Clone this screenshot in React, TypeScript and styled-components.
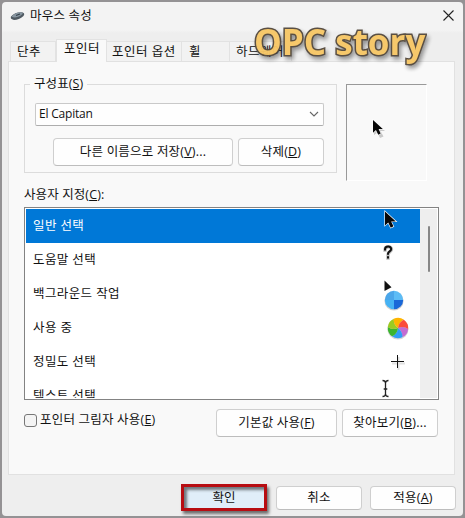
import React, { useState } from "react";
import styled, { createGlobalStyle } from "styled-components";

const GlobalStyle = createGlobalStyle`
  * {
    box-sizing: border-box;
  }
  body {
    margin: 0;
    overflow: hidden;
    background: #949294;
    font-family: "Open Sans", "Noto Sans CJK KR", sans-serif;
    font-size: 12.5px;
    line-height: 16px;
    color: #111;
  }
  u {
    text-underline-offset: 1px;
    text-decoration-thickness: 1px;
  }
`;

const Desktop = styled.div`
  width: 465px;
  height: 518px;
  padding: 2px;
  background: #949294;
`;

const Dialog = styled.div`
  position: relative;
  display: flex;
  flex-direction: column;
  height: 514px;
  padding: 0 7px 0 6px;
  border-radius: 4px;
  background: linear-gradient(#f3f3f3 0, #f3f3f3 28px, #eeeeee 31px);
`;

const TitleBar = styled.header`
  display: flex;
  align-items: center;
  height: 37px;
  padding: 0 0 9px 2px;
  span {
    flex: 1;
    margin-left: 5px;
    letter-spacing: 0.2px;
  }
`;

const CloseButton = styled.button`
  display: flex;
  border: 0;
  padding: 0;
  margin: 0 2px 2px 0;
  background: none;
`;

///////////////////////TABS////////////////////
const TabList = styled.nav`
  display: flex;
  align-items: flex-end;
  height: 22px;
  padding-left: 2px;
`;

interface TabProps {
  $width: number;
  $indent: number;
  $active?: boolean;
}

const Tab = styled.div<TabProps>`
  width: ${(props) => props.$width}px;
  height: ${(props) => (props.$active ? 23 : 20)}px;
  margin-bottom: ${(props) => (props.$active ? -1 : 0)}px;
  padding: ${(props) => (props.$active ? 1 : 2)}px 0 0 ${(props) => props.$indent}px;
  border: 1px solid #e2e2e2;
  border-bottom: 0;
  border-left-width: ${(props) => (props.$active ? 1 : 0)}px;
  background: ${(props) => (props.$active ? "#f9f9f9" : "#f2f2f2")};
  letter-spacing: 0.5px;
  white-space: nowrap;
  z-index: 1;
  &:first-child {
    border-left-width: 1px;
  }
`;

const Panel = styled.main`
  height: 414px;
  width: 447px;
  padding: 22px 15px 0;
  border: 1px solid #e1e1e1;
  background: #f9f9f9;
`;

const SchemeArea = styled.div`
  display: flex;
  justify-content: space-between;
  width: 403px;
`;

const Group = styled.fieldset`
  width: 312px;
  height: 97px;
  margin: -8px 0 0;
  padding: 11px 12px 0 10px;
  border: 1px solid #dcdcdc;
  legend {
    margin-left: -5px;
    padding: 0 4px;
    letter-spacing: 0.1px;
  }
`;

const SchemeSelect = styled.div`
  display: flex;
  align-items: center;
  justify-content: space-between;
  width: 289px;
  height: 23px;
  padding: 0 4px 1px 3px;
  border: 1px solid #c9c9c9;
  border-bottom-color: #adadad;
  border-radius: 2px;
  background: #fefefe;
  font-size: 12px;
  letter-spacing: -0.2px;
`;

const ButtonRow = styled.div<{ $top: number; $gap: number }>`
  display: flex;
  justify-content: flex-end;
  gap: ${(props) => props.$gap}px;
  margin-top: ${(props) => props.$top}px;
`;

const Button = styled.button<{ $width: number; $height?: number }>`
  width: ${(props) => props.$width}px;
  height: ${(props) => props.$height ?? 28}px;
  padding: 0 0 1px;
  border: 1px solid #cfcfcf;
  border-bottom-color: #bdbdbd;
  border-radius: 4px;
  background: #fefefe;
  color: #111;
  font: inherit;
  letter-spacing: 0.2px;
  white-space: nowrap;
`;

const Preview = styled.div`
  width: 81px;
  height: 97px;
  border: 1px solid #fff;
  border-top-color: #999;
  border-left-color: #999;
`;

///////////////////////CURSOR LIST////////////////////
const ListLabel = styled.div`
  margin: 6px 0 4px;
  letter-spacing: 0.1px;
`;

const CursorList = styled.div`
  display: flex;
  width: 415px;
  height: 193px;
  padding: 1px;
  border: 1px solid #838383;
  background: #fff;
  overflow: hidden;
`;

const Rows = styled.div`
  flex: 1;
  height: 189px;
  overflow: hidden;
`;

const Row = styled.div<{ $selected: boolean }>`
  display: flex;
  justify-content: space-between;
  height: 34px;
  padding-left: 7px;
  line-height: 34px;
  letter-spacing: 0.4px;
  color: ${(props) => (props.$selected ? "#fff" : "#111")};
  background: ${(props) => (props.$selected ? "#0078d7" : "#fff")};
`;

const ScrollBar = styled.div`
  width: 17px;
  height: 189px;
  padding: 17px 7px 0 8px;
  background: #eeeeee;
  &::before {
    content: "";
    display: block;
    height: 46px;
    border-radius: 1px;
    background: #868686;
  }
`;

const Options = styled.div`
  display: flex;
  justify-content: space-between;
  width: 414px;
  margin-top: 9px;
`;

const CheckLabel = styled.label`
  display: flex;
  align-items: center;
  height: 22px;
  gap: 3px;
  letter-spacing: 0.2px;
`;

const CheckBox = styled.span`
  width: 13px;
  height: 13px;
  border: 1px solid #777;
  border-radius: 3px;
  background: #f4f4f4;
`;

const Footer = styled.footer`
  display: flex;
  padding: 9px 0 0 173px;
`;

const OkButton = styled.button`
  width: 88px;
  height: 27px;
  margin-right: 8px;
  padding: 0 0 1px;
  border: 3px solid #b70d12;
  background: #e0eef9;
  box-shadow: 2px 3px 3px rgba(0, 0, 0, 0.55), inset 3px 3px 3px rgba(0, 0, 0, 0.5);
  color: #111;
  font: inherit;
  line-height: 17px;
`;

const FooterButtons = styled.div`
  display: flex;
  gap: 8px;
  padding: 2px 0 0 1px;
`;

const Watermark = styled.div`
  position: absolute;
  top: 18px;
  left: 252px;
  z-index: 5;
  font: 700 35px/44px "Open Sans", sans-serif;
  color: #f7c766;
  -webkit-text-stroke: 3px #54493d;
  paint-order: stroke fill;
  filter: drop-shadow(2px 3px 2px rgba(0, 0, 0, 0.4));
  opacity: 0.96;
  white-space: nowrap;
  pointer-events: none;
`;

const Arrow = ({ x, y, scale = 1 }: { x: number; y: number; scale?: number }) => (
  <path
    transform={`translate(${x} ${y}) scale(${scale})`}
    d="M0 0V15.5L3.6 12.3L6.4 18L9.4 16.5L6.8 11H12Z"
    fill="#080808"
    stroke="#fff"
    strokeWidth="1.4"
    paintOrder="stroke"
  />
);

const wedge = (r: number, from: number, to: number) => {
  const point = (a: number, d: number) => {
    const rad = (a * Math.PI) / 180;
    return `${(Math.cos(rad) * d).toFixed(2)} ${(Math.sin(rad) * d).toFixed(2)}`;
  };
  return `M0 0Q${point(from - 28, r * 0.6)} ${point(from, r)}A${r} ${r} 0 0 1 ${point(to, r)}Q${point(to - 28, r * 0.6)} 0 0Z`;
};

const beachColors = ["#c46bd2", "#2f9df5", "#3bb52e", "#9ccb22", "#ffb400", "#fb4b3c"];

const CursorIcon = ({ kind }: { kind: string }) => (
  <svg width="44" height="34" viewBox="0 0 44 34">
    {kind === "normal" && <Arrow x={9} y={2.5} scale={0.9} />}
    {kind === "help" && (
      <g fill="none" strokeLinecap="square">
        <path
          d="M9 7C9 2.8 15.5 2.8 15.5 6.3C15.5 9 12 8.7 12 11.4M12 14.7V15"
          stroke="#bbb"
          strokeWidth="3.4"
        />
        <path
          d="M9 6.4C9 2.6 15.2 2.6 15.2 6C15.2 8.5 12 8.3 12 10.8M12 14.2V14.5"
          stroke="#111"
          strokeWidth="2"
        />
      </g>
    )}
    {kind === "background" && (
      <>
        <path d="M8.5 3.5V14L15.5 10.3Z" fill="#111" />
        <ellipse cx="18" cy="24" rx="9.6" ry="9.4" fill="#d2d2d2" />
        <path d="M18 23V13.8A9.2 9.2 0 0 0 8.8 23Z" fill="#4aa6ea" />
        <path d="M18 23V13.8A9.2 9.2 0 0 1 27.2 23Z" fill="#5cbcf6" />
        <path d="M18 23H8.8A9.2 9.2 0 0 0 18 32.2Z" fill="#45b2f4" />
        <path d="M18 23H27.2A9.2 9.2 0 0 1 18 32.2Z" fill="#1a68d8" />
      </>
    )}
    {kind === "busy" && (
      <>
        <circle cx="22" cy="18" r="10.6" fill="#d6d6d6" />
        <g transform="translate(22 17)">
          {beachColors.map((color, i) => (
            <path key={color} d={wedge(10.2, i * 60 + 5, i * 60 + 66)} fill={color} />
          ))}
        </g>
      </>
    )}
    {kind === "precision" && (
      <>
        <path d="M16 18.5H29M22.5 12V25" stroke="#e2e2e2" strokeWidth="2" />
        <path d="M15 16.5H28M21.5 10V23" stroke="#111" />
      </>
    )}
    {kind === "text" && (
      <path
        d="M6.5 1.5Q9.5 1.5 9.5 4Q9.5 1.5 12.5 1.5M9.5 4V15M7.7 10H11.3M6.5 17.5Q9.5 17.5 9.5 15Q9.5 17.5 12.5 17.5"
        fill="none"
        stroke="#222"
        strokeWidth="1.3"
      />
    )}
  </svg>
);

const cursors = [
  { name: "일반 선택", kind: "normal" },
  { name: "도움말 선택", kind: "help" },
  { name: "백그라운드 작업", kind: "background" },
  { name: "사용 중", kind: "busy" },
  { name: "정밀도 선택", kind: "precision" },
  { name: "텍스트 선택", kind: "text" },
];

const App = () => {
  const [selected, setSelected] = useState(0);

  return (
    <Desktop>
      <GlobalStyle />
      <Dialog>
        <TitleBar>
          <svg width="15" height="10" viewBox="0 0 15 10">
            <path d="M1 5.5Q0 8.5 4 9Q9 9 13.5 5Q15.5 2 12 1.2Q5 0.8 1 5.5Z" fill="#4f5961" />
            <path d="M1.5 5.5Q5 1.4 12 1.3Q14 2.7 10 5Q5 7.6 1.5 5.5Z" fill="#8896a1" />
            <path d="M6 4.5L10 3" stroke="#35404a" strokeWidth="1.2" />
          </svg>
          <span>마우스 속성</span>
          <CloseButton aria-label="닫기">
            <svg width="11" height="11" viewBox="0 0 11 11">
              <path d="M0.5 0.5L10.5 10.5M10.5 0.5L0.5 10.5" stroke="#222" strokeWidth="1.1" />
            </svg>
          </CloseButton>
        </TitleBar>
        <TabList>
          <Tab $width={46} $indent={6}>단추</Tab>
          <Tab $width={51} $indent={7} $active>포인터</Tab>
          <Tab $width={75} $indent={5}>포인터 옵션</Tab>
          <Tab $width={48} $indent={7}>휠</Tab>
          <Tab $width={62} $indent={6}>하드웨어</Tab>
        </TabList>
        <Panel>
          <SchemeArea>
            <Group>
              <legend>구성표(<u>S</u>)</legend>
              <SchemeSelect>
                El Capitan
                <svg width="10" height="6" viewBox="0 0 10 6">
                  <path d="M1 1L5 5L9 1" fill="none" stroke="#666" strokeWidth="1.1" />
                </svg>
              </SchemeSelect>
              <ButtonRow $top={12} $gap={5}>
                <Button $width={180}>다른 이름으로 저장(<u>V</u>)...</Button>
                <Button $width={86}>삭제(<u>D</u>)</Button>
              </ButtonRow>
            </Group>
            <Preview>
              <svg width="79" height="95" viewBox="0 0 79 95">
                <path d="M27 37V50L30.5 47.5L33 53L36.5 51.5L33.5 46H38Z" fill="#c9c9c9" />
                <Arrow x={26} y={35} scale={0.82} />
              </svg>
            </Preview>
          </SchemeArea>
          <ListLabel>사용자 지정(<u>C</u>):</ListLabel>
          <CursorList>
            <Rows>
              {cursors.map((cursor, index) => (
                <Row
                  key={cursor.kind}
                  $selected={index === selected}
                  onClick={() => setSelected(index)}
                >
                  {cursor.name}
                  <CursorIcon kind={cursor.kind} />
                </Row>
              ))}
            </Rows>
            <ScrollBar />
          </CursorList>
          <Options>
            <CheckLabel>
              <CheckBox />
              <span>포인터 그림자 사용(<u>E</u>)</span>
            </CheckLabel>
            <ButtonRow $top={0} $gap={5}>
              <Button $width={121}>기본값 사용(<u>F</u>)</Button>
              <Button $width={96}>찾아보기(<u>B</u>)...</Button>
            </ButtonRow>
          </Options>
        </Panel>
        <Footer>
          <OkButton>확인</OkButton>
          <FooterButtons>
            <Button $width={86} $height={24}>취소</Button>
            <Button $width={86} $height={24}>적용(<u>A</u>)</Button>
          </FooterButtons>
        </Footer>
        <Watermark>OPC story</Watermark>
      </Dialog>
    </Desktop>
  );
};

export default App;
